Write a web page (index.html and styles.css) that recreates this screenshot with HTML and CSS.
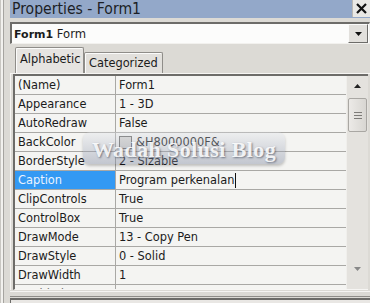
FILE: index.html
```html
<!DOCTYPE html>
<html>
<head>
<meta charset="utf-8">
<link rel="stylesheet" href="styles.css">
</head>
<body>
<div class="window">
  <div class="titlebar">
    <span class="title">Properties - Form1</span>
    <span class="close"><svg width="13" height="13" viewBox="0 0 13 13"><path d="M2 2 L11 11 M11 2 L2 11" stroke="#111" stroke-width="2.2"/></svg></span>
  </div>
  <div class="combo">
    <span class="combo-text"><b>Form1</b> Form</span>
    <span class="combo-btn"><svg width="7" height="4" viewBox="0 0 7 4"><path d="M0 0 H7 L3.5 4 Z" fill="#111"/></svg></span>
  </div>
  <div class="tabs">
    <div class="tab active">Alphabetic</div>
    <div class="tab">Categorized</div>
  </div>
  <div class="panel">
    <div class="grid">
      <div class="rows">
        <div class="row"><div class="name">(Name)</div><div class="value">Form1</div></div>
        <div class="row"><div class="name">Appearance</div><div class="value">1 - 3D</div></div>
        <div class="row"><div class="name">AutoRedraw</div><div class="value">False</div></div>
        <div class="row"><div class="name">BackColor</div><div class="value"><span class="swatch"></span>&amp;H8000000F&amp;</div></div>
        <div class="row"><div class="name">BorderStyle</div><div class="value">2 - Sizable</div></div>
        <div class="row"><div class="name selected">Caption</div><div class="value">Program perkenalan<span class="caret"></span></div></div>
        <div class="row"><div class="name">ClipControls</div><div class="value">True</div></div>
        <div class="row"><div class="name">ControlBox</div><div class="value">True</div></div>
        <div class="row"><div class="name">DrawMode</div><div class="value">13 - Copy Pen</div></div>
        <div class="row"><div class="name">DrawStyle</div><div class="value">0 - Solid</div></div>
        <div class="row"><div class="name">DrawWidth</div><div class="value">1</div></div>
        <div class="row partial"><div class="name">Enabled</div><div class="value">True</div></div>
      </div>
      <div class="scrollbar">
        <div class="sb-btn"><svg width="7" height="4" viewBox="0 0 7 4"><path d="M0 4 H7 L3.5 0 Z" fill="#222"/></svg></div>
        <div class="sb-thumb"><span></span><span></span><span></span></div>
        <div class="sb-track"></div>
        <div class="sb-btn down"><svg width="7" height="4" viewBox="0 0 7 4"><path d="M0 0 H7 L3.5 4 Z" fill="#888"/></svg></div>
      </div>
    </div>
  </div>
  <div class="splitter"></div>
  <div class="desc"></div>
  <div class="watermark">Wadah Solusi Blog</div>
</div>
</body>
</html>
```
FILE: styles.css
```css
html, body {
  margin: 0;
  padding: 0;
}
body {
  width: 370px;
  height: 303px;
  overflow: hidden;
  background: #dcdad5;
  font-family: "DejaVu Sans", Verdana, sans-serif;
  font-size: 11.4px;
  color: #1b1b1b;
}
.window {
  position: relative;
  height: 303px;
  padding-left: 10px;
  box-sizing: border-box;
  display: flex;
  flex-direction: column;
  background: linear-gradient(to right, #c9c7c2 0 1px, #f2f1ee 1px 3px, #a6a4a0 3px 4px, #dcdad5 4px);
}
.titlebar {
  height: 18px;
  background: #93a8c9;
  display: flex;
  align-items: center;
  justify-content: space-between;
}
.title {
  font-family: "DejaVu Sans Condensed", "DejaVu Sans", sans-serif;
  font-size: 15.6px;
  color: #1c1f26;
  padding-left: 2px;
  line-height: 18px;
}
.close {
  width: 17px;
  height: 17px;
  background: #e9e8e5;
  border-left: 1px solid #b9b8b5;
  display: flex;
  align-items: center;
  justify-content: center;
  align-self: flex-start;
}
.combo {
  margin-top: 4px;
  height: 22px;
  box-sizing: border-box;
  border-top: 2px solid #6d6c69;
  border-left: 2px solid #6d6c69;
  border-bottom: 1px solid #f2f1ee;
  border-right: 1px solid #f2f1ee;
  background: #fcfcfb;
  display: flex;
  align-items: center;
  justify-content: space-between;
}
.combo-text {
  padding-left: 2px;
  font-size: 11.6px;
}
.combo-text b {
  font-size: 11px;
}
.combo-btn {
  width: 20px;
  height: 19px;
  box-sizing: border-box;
  margin-right: 1px;
  background: #e2e0dc;
  border-top: 1px solid #fbfbfa;
  border-left: 1px solid #fbfbfa;
  border-bottom: 1px solid #6d6c69;
  border-right: 1px solid #6d6c69;
  display: flex;
  align-items: center;
  justify-content: center;
}
.tabs {
  margin-top: 3px;
  height: 26px;
  padding-left: 5px;
  display: flex;
  align-items: flex-end;
}
.tab {
  box-sizing: border-box;
  height: 21px;
  padding: 0 4px;
  border: 1px solid #8f8d89;
  border-bottom: none;
  border-radius: 2px 2px 0 0;
  background: #e2e0dc;
  box-shadow: inset 1px 1px 0 #fbfbfa;
  display: flex;
  align-items: center;
  font-size: 11.4px;
  width: 79px;
}
.tab.active {
  height: 26px;
  width: 69px;
  background: #e6e4e1;
  padding-bottom: 4px;
}
.panel {
  flex: 0 0 auto;
  border-left: 1px solid #f6f5f3;
  padding-left: 2px;
  border-top: 1px solid #f6f5f3;
}
.grid {
  height: 216px;
  box-sizing: border-box;
  border-top: 2px solid #6d6c69;
  border-left: 2px solid #6d6c69;
  border-bottom: 1px solid #f6f5f3;
  margin-right: 2px;
  background: #f4f4f2;
  display: flex;
  overflow: hidden;
}
.rows {
  flex: 1;
  overflow: hidden;
}
.row {
  height: 19px;
  box-sizing: border-box;
  border-bottom: 1px solid #a9a8a5;
  display: flex;
}
.row.partial {
  color: #6d6c69;
}
.name {
  width: 101px;
  flex: 0 0 101px;
  box-sizing: border-box;
  padding-left: 3px;
  border-right: 1px solid #a9a8a5;
  line-height: 18px;
  white-space: nowrap;
}
.name.selected {
  background: #3399f3;
  color: #eaf3ff;
}
.value {
  padding-left: 3px;
  line-height: 18px;
  white-space: nowrap;
  display: flex;
  align-items: center;
}
.swatch {
  width: 13px;
  height: 13px;
  box-sizing: border-box;
  border: 1px solid #6d6c69;
  background: #d9d7d3;
  margin-right: 4px;
}
.caret {
  width: 1px;
  height: 15px;
  background: #111;
  margin-left: 1px;
}
.scrollbar {
  width: 21px;
  flex: 0 0 21px;
  background: #e4e2de;
  display: flex;
  flex-direction: column;
  border-left: 1px solid #f0efec;
}
.sb-btn {
  height: 20px;
  display: flex;
  align-items: center;
  justify-content: center;
}
.sb-btn.down {
  height: 24px;
  align-items: flex-start;
  padding-top: 2px;
  box-sizing: border-box;
}
.sb-thumb {
  margin: 2px 1px 0;
  height: 34px;
  box-sizing: border-box;
  border: 1px solid #a9a7a3;
  border-radius: 2px;
  background: linear-gradient(to right, #eceae7, #d8d6d2);
  display: flex;
  flex-direction: column;
  align-items: center;
  justify-content: center;
  gap: 2px;
}
.sb-thumb span {
  width: 8px;
  height: 1px;
  background: #7d7b78;
}
.sb-track {
  flex: 1;
}
.splitter {
  height: 6px;
  box-sizing: border-box;
  border-top: 1px solid #f6f5f3;
  border-bottom: 1px solid #8f8d89;
  margin-top: 1px;
}
.desc {
  flex: 1;
  margin-top: 1px;
  border-top: 2px solid #6d6c69;
  border-left: 1px solid #6d6c69;
  background: #e9e7e4;
}
.watermark {
  position: absolute;
  left: 83px;
  top: 132px;
  width: 202px;
  height: 32px;
  box-sizing: border-box;
  padding-bottom: 3px;
  border-radius: 7px;
  background: linear-gradient(to bottom, rgba(225,228,235,0.3), rgba(120,130,155,0.4));
  box-shadow: 0 2px 3px rgba(0,0,0,0.22);
  display: flex;
  align-items: flex-end;
  justify-content: center;
  font-family: "Liberation Serif", "DejaVu Serif", serif;
  font-weight: bold;
  font-size: 22px;
  line-height: 22px;
  color: rgba(255,255,255,0.88);
  text-shadow: 1px 1px 2px rgba(40,50,70,0.55);
  letter-spacing: 0.4px;
}
```
